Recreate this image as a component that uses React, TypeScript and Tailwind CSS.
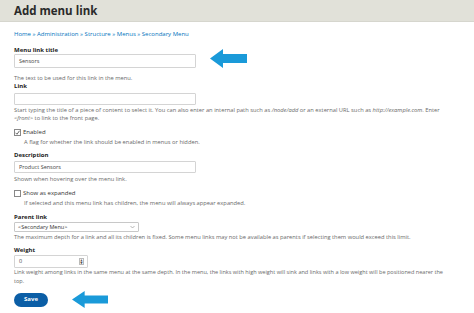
import React from "react";

const FONT = { fontFamily: '"Open Sans", "DejaVu Sans", sans-serif' };

function Arrow({ w, h }: { w: number; h: number }) {
  return (
    <svg width={w} height={h} viewBox="0 0 37 19" preserveAspectRatio="none">
      <polygon points="0,9.5 13,0 13,5 37,5 37,14 13,14 13,19" fill="#1a9ad9" />
    </svg>
  );
}

function Label({ children, className = "" }: { children: React.ReactNode; className?: string }) {
  return <p className={`text-[6px] leading-[8px] font-bold text-[#222] ${className}`}>{children}</p>;
}

function Help({ children, className = "" }: { children: React.ReactNode; className?: string }) {
  return <p className={`text-[5.75px] leading-[8px] text-[#6a6a6a] ${className}`}>{children}</p>;
}

function TextBox({ value = "", className = "" }: { value?: string; className?: string }) {
  return (
    <div className={`w-[182px] border border-[#d4d4d4] rounded-[1px] bg-white flex items-center px-[4px] text-[5.5px] text-[#444] ${className}`}>
      {value}
    </div>
  );
}

function Check({ checked, label }: { checked?: boolean; label: string }) {
  return (
    <div className="flex items-center gap-[2px] h-[8px]">
      <span className="w-[7px] h-[7px] border border-[#888] bg-white flex items-center justify-center">
        {checked && (
          <svg width="5" height="5" viewBox="0 0 10 10">
            <path d="M1 5.5 L4 8.5 L9 1.5" stroke="#444" strokeWidth="1.6" fill="none" />
          </svg>
        )}
      </span>
      <span className="text-[6px] text-[#333]">{label}</span>
    </div>
  );
}

export default function App() {
  return (
    <div className="w-[474px] h-[313px] bg-white overflow-hidden" style={FONT}>
      {/* Header */}
      <div className="h-[22px] bg-[#e1e1d9] border-b border-[#d6d6ce] flex items-center px-[14px]">
        <h1 className="text-[11.5px] font-bold text-[#2a2a2a]">Add menu link</h1>
      </div>

      <div className="px-[14px]">
        {/* Breadcrumb */}
        <p className="mt-[8px] text-[6px] leading-[8px] text-[#0074bd]">
          Home » Administration » Structure » Menus » Secondary Menu
        </p>

        {/* Menu link title */}
        <Label className="mt-[8px]">Menu link title</Label>
        <div className="relative">
          <TextBox value="Sensors" className="h-[14px]" />
          <div className="absolute left-[196px] top-[-5px]">
            <Arrow w={37} h={19} />
          </div>
        </div>
        <Help className="mt-[6px]">The text to be used for this link in the menu.</Help>

        {/* Link */}
        <Label>Link</Label>
        <TextBox className="mt-[3px] h-[12px]" />
        <Help className="mt-[1px]">
          Start typing the title of a piece of content to select it. You can also enter an internal path such as <i>/node/add</i> or an external URL such as <i>http://example.com</i>. Enter
          <br />
          <i>&lt;front&gt;</i> to link to the front page.
        </Help>

        {/* Enabled */}
        <div className="mt-[6px]">
          <Check checked label="Enabled" />
        </div>
        <Help className="mt-[2px] pl-[10px]">A flag for whether the link should be enabled in menus or hidden.</Help>

        {/* Description */}
        <Label className="mt-[5px]">Description</Label>
        <TextBox value="Product Sensors" className="mt-[2px] h-[12px]" />
        <Help className="mt-[2px]">Shown when hovering over the menu link.</Help>

        {/* Show as expanded */}
        <div className="mt-[6px]">
          <Check label="Show as expanded" />
        </div>
        <Help className="mt-[2px] pl-[10px]">
          If selected and this menu link has children, the menu will always appear expanded.
        </Help>

        {/* Parent link */}
        <Label className="mt-[6px]">Parent link</Label>
        <div className="mt-[1px] w-[125px] h-[10px] border border-[#c8c8c8] rounded-[1px] bg-white flex items-center justify-between px-[3px]">
          <span className="text-[5.5px] text-[#333]">&lt;Secondary Menu&gt;</span>
          <svg width="5" height="4" viewBox="0 0 10 6">
            <path d="M1 1 L5 5 L9 1" stroke="#999" strokeWidth="1.4" fill="none" />
          </svg>
        </div>
        <Help className="mt-[1px]">
          The maximum depth for a link and all its children is fixed. Some menu links may not be available as parents if selecting them would exceed this limit.
        </Help>

        {/* Weight */}
        <Label className="mt-[5px]">Weight</Label>
        <div className="mt-[1px] w-[74px] h-[13px] border border-[#d4d4d4] rounded-[1px] bg-white flex items-center justify-between pl-[4px] pr-[3px]">
          <span className="text-[5.5px] text-[#444]">0</span>
          <span className="w-[5px] h-[7px] border border-[#bbb] flex flex-col items-center justify-center text-[3px] leading-[3px] text-[#555]">
            <span>▲</span>
            <span>▼</span>
          </span>
        </div>
        <p className="text-[5.55px] leading-[9px] text-[#6a6a6a]">
          Link weight among links in the same menu at the same depth. In the menu, the links with high weight will sink and links with a low weight will be positioned nearer the
          <br />
          top.
        </p>

        {/* Save */}
        <div className="mt-[5px] flex items-center gap-[24px]">
          <button className="w-[34px] h-[14px] rounded-full bg-[#0b5ea6] text-white text-[6px] font-bold">
            Save
          </button>
          <Arrow w={36} h={17} />
        </div>
      </div>
    </div>
  );
}
